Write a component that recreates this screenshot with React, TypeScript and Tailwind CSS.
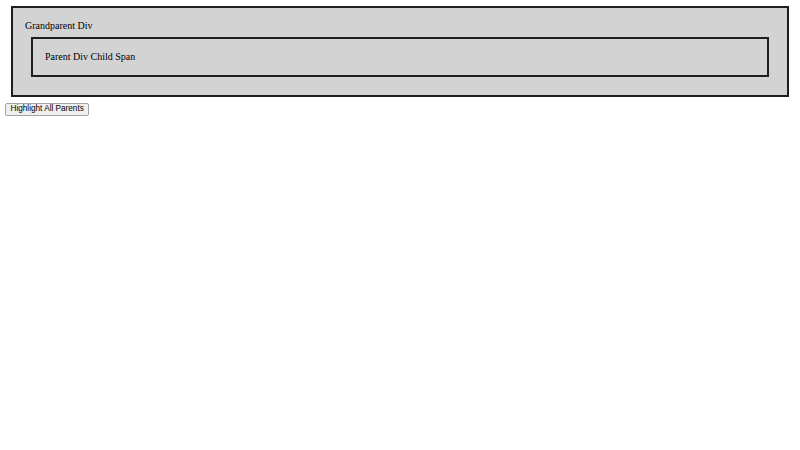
export default function App() {
  return (
    <div className="min-h-screen bg-white px-[5px] pt-[6px] font-['Liberation_Serif',serif] text-black">
      <div className="mx-[6px] border-2 border-[#1f1f1f] bg-[#d3d3d3] p-[12px]">
        <div className="text-[10px] leading-[11px]">Grandparent Div</div>
        <div className="m-[6px] border-2 border-[#1f1f1f] px-[12px] pt-[12px] pb-[13px]">
          <span className="block text-[10px] leading-[11px]">Parent Div Child Span</span>
        </div>
      </div>
      <button className="mt-[6px] flex h-[13px] items-center rounded-[2px] border border-[#a3a3a3] bg-[#efefef] px-[4.5px] font-['Liberation_Sans',Arial,sans-serif] text-[8.2px] leading-none text-black">
        Highlight All Parents
      </button>
    </div>
  );
}
